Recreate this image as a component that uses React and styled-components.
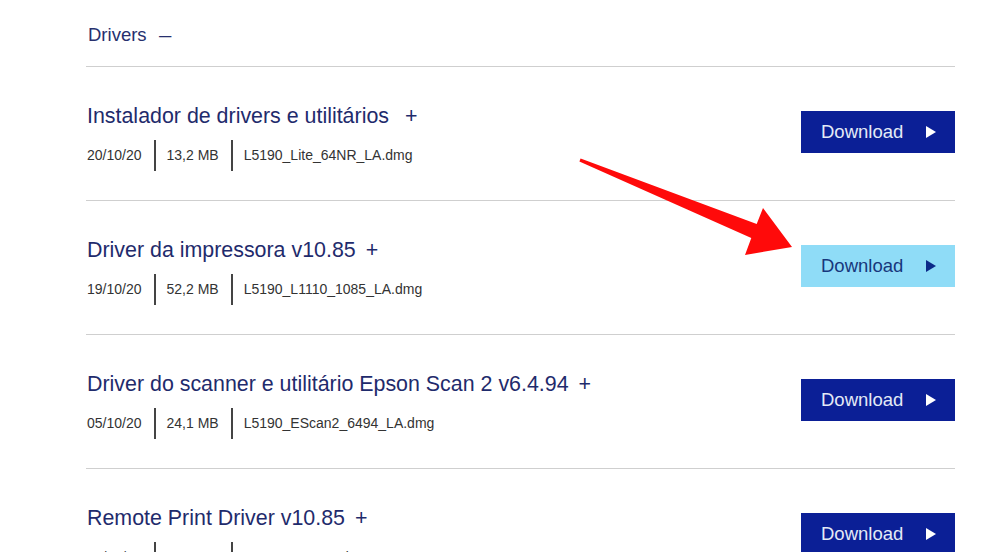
import React from 'react';
import styled, { createGlobalStyle } from 'styled-components';

const GlobalStyle = createGlobalStyle`
  body {
    margin: 0;
    background: #ffffff;
    font-family: "Liberation Sans", Arial, sans-serif;
    overflow: hidden;
  }
`;

const Page = styled.main`
  position: relative;
  width: 984px;
  height: 552px;
  overflow: hidden;
  background: #fff;
`;

const Section = styled.section`
  margin-left: 86px;
  width: 869px;
`;

const SectionHeader = styled.header`
  height: 62px;
  display: flex;
  align-items: center;
  padding: 4px 0 0 2px;
  border-bottom: 1px solid #cfcfcf;
  color: #27306e;
  font-size: 18.5px;
`;

const Toggle = styled.span`
  margin-left: 13px;
  display: inline-block;
  transform: scaleX(1.2);
`;

const Row = styled.article`
  display: flex;
  justify-content: space-between;
  align-items: flex-start;
  padding: 37px 0 29px 1px;
  border-bottom: 1px solid #cfcfcf;
`;

const Info = styled.div`
  display: flex;
  flex-direction: column;
  gap: 11px;
`;

const Title = styled.h2`
  margin: 0;
  font-size: 21.4px;
  line-height: 24px;
  font-weight: normal;
  color: #1f2b6c;
`;

const Plus = styled.span`
  margin-left: ${(p) => p.$gap}px;
`;

const Meta = styled.div`
  display: flex;
  align-items: center;
  height: 32px;
  font-size: 14px;
  color: #333;
`;

const MetaItem = styled.span`
  padding: 0 12px 0 11px;
  &:first-child {
    padding-left: 0;
  }
  & + & {
    border-left: 2px solid #444;
    line-height: 31px;
  }
`;

const DownloadButton = styled.button`
  margin-top: 7px;
  width: 154px;
  height: 42px;
  display: flex;
  align-items: center;
  justify-content: space-between;
  padding: 0 19px 0 20px;
  border: none;
  font-family: inherit;
  font-size: 18.5px;
  background: ${(p) => (p.$active ? '#8fdcf7' : '#0b1f96')};
  color: ${(p) => (p.$active ? '#17377c' : '#e4eaf6')};
  cursor: pointer;
`;

const Triangle = styled.span`
  width: 0;
  height: 0;
  border-top: 6px solid transparent;
  border-bottom: 6px solid transparent;
  border-left: 10px solid ${(p) => (p.$active ? '#0c2a88' : '#ffffff')};
`;

const Arrow = styled.svg`
  position: absolute;
  left: 0;
  top: 0;
  pointer-events: none;
`;

const drivers = [
  { title: 'Instalador de drivers e utilitários', gap: 16, date: '20/10/20', size: '13,2 MB', file: 'L5190_Lite_64NR_LA.dmg' },
  { title: 'Driver da impressora v10.85', gap: 10, date: '19/10/20', size: '52,2 MB', file: 'L5190_L1110_1085_LA.dmg', active: true },
  { title: 'Driver do scanner e utilitário Epson Scan 2 v6.4.94', gap: 10, date: '05/10/20', size: '24,1 MB', file: 'L5190_EScan2_6494_LA.dmg' },
  { title: 'Remote Print Driver v10.85', gap: 10, date: '20/10/20', size: '27,3 MB', file: 'RPD_1085_LA.dmg' },
];

export default function App() {
  return (
    <Page>
      <GlobalStyle />
      <Section>
        <SectionHeader>
          Drivers<Toggle>–</Toggle>
        </SectionHeader>
        {drivers.map((d) => (
          <Row key={d.file}>
            <Info>
              <Title>
                {d.title}
                <Plus $gap={d.gap}>+</Plus>
              </Title>
              <Meta>
                <MetaItem>{d.date}</MetaItem>
                <MetaItem>{d.size}</MetaItem>
                <MetaItem>{d.file}</MetaItem>
              </Meta>
            </Info>
            <DownloadButton $active={d.active}>
              Download
              <Triangle $active={d.active} />
            </DownloadButton>
          </Row>
        ))}
      </Section>
      <Arrow width="984" height="552" viewBox="0 0 984 552">
        <polygon
          fill="#ff0a0a"
          points="580.6,158.4 756.7,224 763,208 792,247 745,255 751.3,238 579.4,161.6"
        />
      </Arrow>
    </Page>
  );
}
